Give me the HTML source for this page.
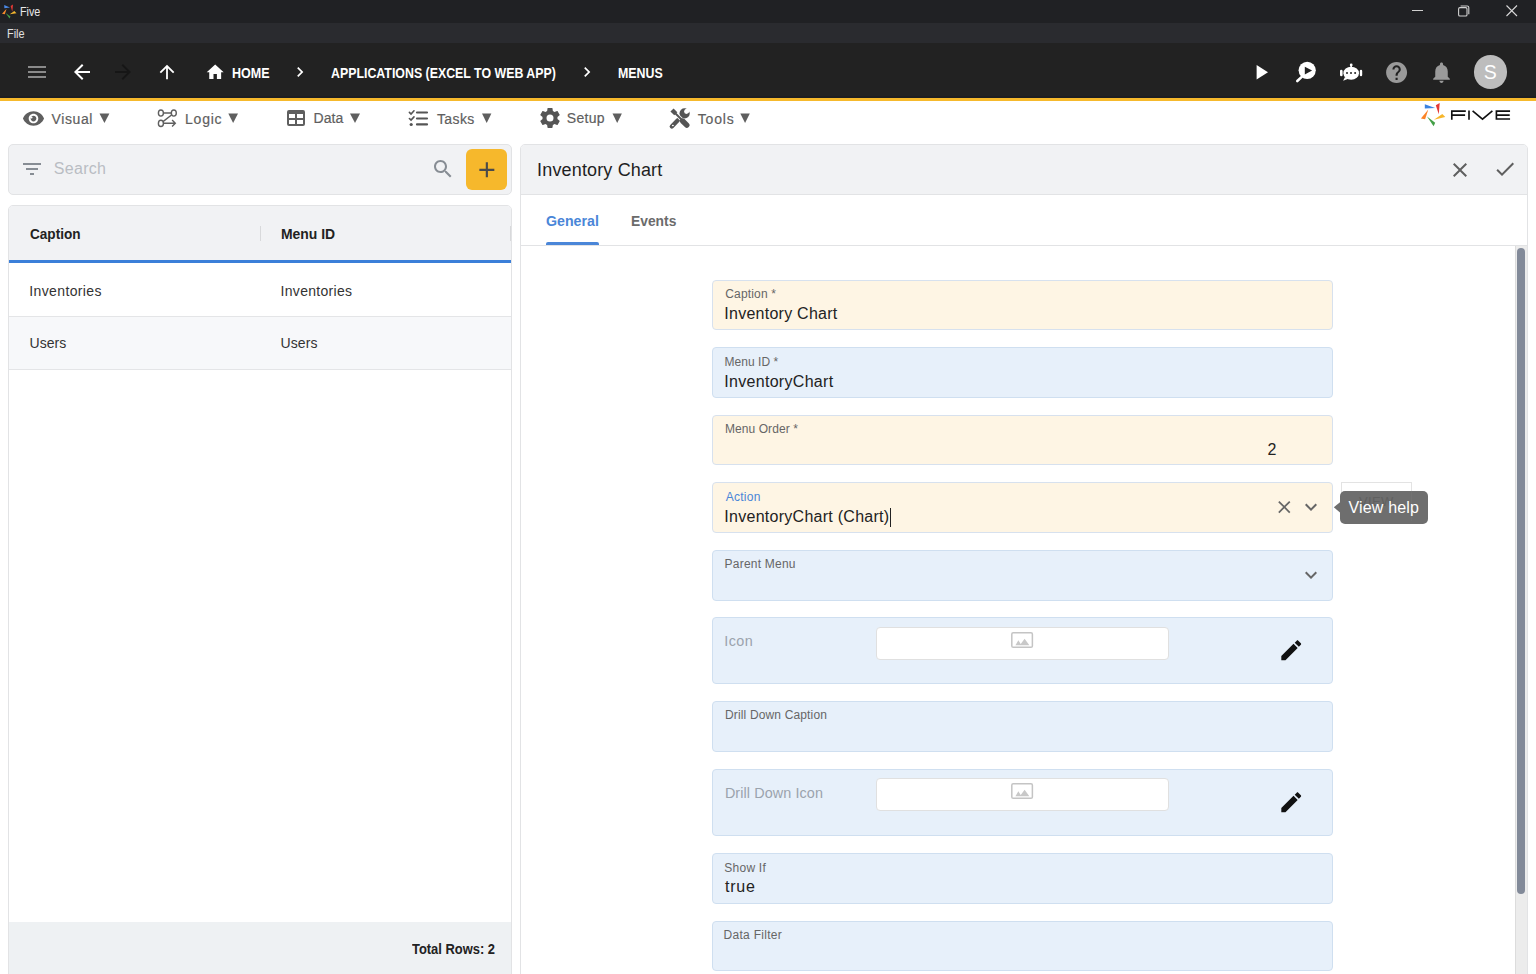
<!DOCTYPE html>
<html><head><meta charset="utf-8">
<style>
*{margin:0;padding:0;box-sizing:border-box}
html,body{width:1536px;height:974px;overflow:hidden;background:#fff;font-family:"Liberation Sans",sans-serif;position:relative}
.a{position:absolute}
.t{position:absolute;white-space:nowrap;line-height:1;transform-origin:0 0}
svg{position:absolute;overflow:visible}
#tVisual,#tLogic,#tData,#tTasks,#tSetup,#tTools{-webkit-text-stroke:0.2px currentColor}
</style><style id="adj">
#tFive{letter-spacing:0.0px;margin-left:0.0px;margin-top:0.7px;transform:scaleX(0.842)}
#tFile{letter-spacing:0.0px;margin-left:0.2px;margin-top:1.05px;transform:scaleX(0.8653)}
#tHome{letter-spacing:0.0px;margin-left:-0.35px;margin-top:0.35px;transform:scaleX(0.8953)}
#tApps{letter-spacing:0.0px;margin-left:-0.0px;margin-top:0.35px;transform:scaleX(0.8831)}
#tMenus{letter-spacing:0.0px;margin-left:-0.35px;margin-top:0.35px;transform:scaleX(0.8844)}
#tS{letter-spacing:0.0px;margin-left:0.84px;margin-top:0.42px;transform:scaleX(1.0)}
#tVisual{letter-spacing:0.608px;margin-left:0.0px;margin-top:0.7px;transform:scaleX(1.0)}
#tLogic{letter-spacing:0.78px;margin-left:-0.28px;margin-top:0.7px;transform:scaleX(1.0)}
#tData{letter-spacing:0.134px;margin-left:-0.36px;margin-top:0.0px;transform:scaleX(1.0)}
#tTasks{letter-spacing:0.4px;margin-left:0.28px;margin-top:0.7px;transform:scaleX(1.0)}
#tSetup{letter-spacing:0.32px;margin-left:-0.42px;margin-top:0.0px;transform:scaleX(1.0)}
#tTools{letter-spacing:0.84px;margin-left:-0.14px;margin-top:0.7px;transform:scaleX(1.0)}
#tSearch{letter-spacing:0.288px;margin-left:-0.98px;margin-top:0.42px;transform:scaleX(1.0)}
#tCapH{letter-spacing:0.0px;margin-left:0.0px;margin-top:0.35px;transform:scaleX(0.9434)}
#tMidH{letter-spacing:0.0px;margin-left:-0.35px;margin-top:0.35px;transform:scaleX(0.9679)}
#tInv1{letter-spacing:0.368px;margin-left:-0.7px;margin-top:0.7px;transform:scaleX(1.0)}
#tInv2{letter-spacing:0.304px;margin-left:-0.56px;margin-top:0.7px;transform:scaleX(1.0)}
#tUsr2{letter-spacing:0.08px;margin-left:-0.56px;margin-top:-0.28px;transform:scaleX(1.0)}
#tTotal{letter-spacing:0.0px;margin-left:0.0px;margin-top:0.7px;transform:scaleX(0.9223)}
#tTitle{letter-spacing:0.148px;margin-left:-1.4px;margin-top:-0.14px;transform:scaleX(1.0)}
#tGeneral{letter-spacing:0.0px;margin-left:-0.0px;margin-top:0.0px;transform:scaleX(0.9455)}
#tEvents{letter-spacing:0.0px;margin-left:-0.35px;margin-top:0.0px;transform:scaleX(0.9212)}
#lCap{letter-spacing:0.16px;margin-left:0.28px;margin-top:0.84px;transform:scaleX(1.0)}
#vCap{letter-spacing:0.251px;margin-left:-0.7px;margin-top:0.98px;transform:scaleX(1.0)}
#lMid{letter-spacing:0.03px;margin-left:-0.42px;margin-top:0.98px;transform:scaleX(1.0)}
#vMid{letter-spacing:0.296px;margin-left:-0.7px;margin-top:0.7px;transform:scaleX(1.0)}
#lOrd{letter-spacing:0.073px;margin-left:0.0px;margin-top:0.28px;transform:scaleX(1.0)}
#vOrd{letter-spacing:0.0px;margin-left:-0.28px;margin-top:1.26px;transform:scaleX(1.0)}
#lAct{letter-spacing:0.256px;margin-left:0.7px;margin-top:0.7px;transform:scaleX(1.0)}
#vAct{letter-spacing:0.27px;margin-left:-0.7px;margin-top:0.8px;transform:scaleX(1.0)}
#tHelp{letter-spacing:0.16px;margin-left:0.0px;margin-top:0.56px;transform:scaleX(1.0)}
#lPar{letter-spacing:0.224px;margin-left:-0.42px;margin-top:0.0px;transform:scaleX(1.0)}
#lIcon{letter-spacing:0.374px;margin-left:-0.7px;margin-top:0.14px;transform:scaleX(1.0)}
#lDdc{letter-spacing:0.15px;margin-left:0.0px;margin-top:0.56px;transform:scaleX(1.0)}
#lDdi{letter-spacing:0.091px;margin-left:-0.14px;margin-top:0.2px;transform:scaleX(1.0)}
#lShow{letter-spacing:0.24px;margin-left:-0.7px;margin-top:0.84px;transform:scaleX(1.0)}
#vShow{letter-spacing:0.746px;margin-left:0.0px;margin-top:0.0px;transform:scaleX(1.0)}
#lFilt{letter-spacing:0.272px;margin-left:-1.4px;margin-top:0.84px;transform:scaleX(1.0)}
#tUsr1{letter-spacing:0.08px;margin-left:-0.56px;margin-top:-0.28px;transform:scaleX(1.0)}
</style></head><body>

<!-- title bar -->
<div class="a" style="left:0;top:0;width:1536px;height:23px;background:#202124"></div>
<svg style="left:0;top:0" width="20" height="22" viewBox="0 0 20 22">
  <polygon points="4.2,5 4.4,8.3 10,7.6" fill="#4a8ae8"/>
  <polygon points="10.6,6 13,4.6 12.3,11.8" fill="#e53935"/>
  <polygon points="14.3,11 16.5,13.3 9.8,14.2" fill="#f5b82e"/>
  <polygon points="10.5,16.6 9.5,18.6 5.6,13.1" fill="#43a047"/>
  <polygon points="2,13.8 4.8,14.3 6.6,8.8" fill="#fb8c2c"/>
</svg>
<div class="t" id="tFive" style="left:19.8px;top:5.6px;font-size:12.8px;color:#e8e8e8">Five</div>
<!-- window controls -->
<div class="a" style="left:1412px;top:10px;width:10.5px;height:1.2px;background:#d0d0d0"></div>
<svg style="left:1458px;top:5px" width="12" height="12" viewBox="0 0 12 12"><rect x="0.6" y="2.6" width="8.4" height="8.4" rx="1.3" fill="none" stroke="#d0d0d0" stroke-width="1.1"/><path d="M2.6 1 H9.2 A1.6 1.6 0 0 1 10.8 2.6 V9.2" fill="none" stroke="#d0d0d0" stroke-width="1.1"/></svg>
<svg style="left:1505.5px;top:5px" width="12" height="12" viewBox="0 0 12 12"><path d="M0.5 0.5 L11 11 M11 0.5 L0.5 11" stroke="#d8d8d8" stroke-width="1.1"/></svg>

<!-- menu bar -->
<div class="a" style="left:0;top:23px;width:1536px;height:20px;background:#2a2b2f"></div><div class="a" style="left:0;top:43px;width:1536px;height:1px;background:#26272a"></div>
<div class="t" id="tFile" style="left:6.6px;top:26.8px;font-size:12.6px;color:#e0e0e0">File</div>

<!-- nav bar -->
<div class="a" style="left:0;top:43px;width:1536px;height:55px;background:#222222"></div>
<div class="a" style="left:0;top:96px;width:1536px;height:2px;background:#1d1e21"></div>
<div class="a" style="left:0;top:98px;width:1536px;height:3px;background:#f6b92c"></div>

<!-- nav icons -->
<svg style="left:25px;top:60px" width="24" height="24" viewBox="0 0 24 24"><path fill="#8a8a8a" d="M3 18h18v-2H3v2zm0-5h18v-2H3v2zm0-7v2h18V6H3z"/></svg>
<svg style="left:70px;top:60px" width="24" height="24" viewBox="0 0 24 24"><path fill="#ffffff" d="M20 11H7.83l5.59-5.59L12 4l-8 8 8 8 1.41-1.41L7.83 13H20v-2z"/></svg>
<svg style="left:111px;top:60px" width="24" height="24" viewBox="0 0 24 24"><path fill="#161616" d="M12 4l-1.41 1.41L16.17 11H4v2h12.17l-5.58 5.59L12 20l8-8z"/></svg>
<svg style="left:156px;top:61px" width="22" height="22" viewBox="0 0 24 24"><path fill="#ffffff" d="M4 12l1.41 1.41L11 7.83V20h2V7.83l5.58 5.59L20 12l-8-8-8 8z"/></svg>
<svg style="left:205.3px;top:62.4px" width="20.4" height="20.4" viewBox="0 0 24 24"><path fill="#ffffff" d="M10 20v-6h4v6h5v-8h3L12 3 2 12h3v8z"/></svg>
<div class="t" id="tHome" style="left:231.9px;top:65.5px;font-size:14px;font-weight:bold;color:#fff">HOME</div>
<svg style="left:290px;top:62px" width="20" height="20" viewBox="0 0 24 24"><path fill="#fff" d="M10 6L8.59 7.41 13.17 12l-4.58 4.59L10 18l6-6z"/></svg>
<div class="t" id="tApps" style="left:331.2px;top:65.5px;font-size:14px;font-weight:bold;color:#fff">APPLICATIONS (EXCEL TO WEB APP)</div>
<svg style="left:577px;top:62px" width="20" height="20" viewBox="0 0 24 24"><path fill="#fff" d="M10 6L8.59 7.41 13.17 12l-4.58 4.59L10 18l6-6z"/></svg>
<div class="t" id="tMenus" style="left:618.1px;top:65.5px;font-size:14px;font-weight:bold;color:#fff">MENUS</div>

<!-- right nav icons -->
<svg style="left:1253px;top:63px" width="18" height="18" viewBox="0 0 18 18"><path fill="#fff" d="M3.6 2 L3.6 16.4 L15 9.2 Z"/></svg>
<svg style="left:1290px;top:56px" width="32" height="32" viewBox="0 0 32 32">
  <circle cx="17.2" cy="14.3" r="8.6" fill="#fff"/>
  <path d="M14.8 10.7 L14.8 18.5 L22.1 14.6 Z" fill="#222"/>
  <path d="M7.3 25 L12 20.6" stroke="#fff" stroke-width="2.6" stroke-linecap="round"/>
</svg>
<svg style="left:1330px;top:56px" width="40" height="32" viewBox="0 0 40 32">
  <ellipse cx="21.2" cy="17.2" rx="7.8" ry="6.5" fill="#fff"/>
  <circle cx="21.2" cy="9" r="1.4" fill="#fff"/>
  <path d="M21.2 8 V11" stroke="#fff" stroke-width="1.6"/>
  <rect x="10" y="13.8" width="2.6" height="6.5" rx="1.3" fill="#fff"/>
  <rect x="29.8" y="13.8" width="2.4" height="6.5" rx="1.2" fill="#fff"/>
  <path d="M15 21 L13.1 24.7 L19 22.5 Z" fill="#fff"/>
  <circle cx="17" cy="16.9" r="1" fill="#222"/><circle cx="21" cy="16.9" r="1" fill="#222"/><circle cx="25.1" cy="16.9" r="1" fill="#222"/>
</svg>
<svg style="left:1383.5px;top:59.5px" width="25.2" height="25.2" viewBox="0 0 24 24"><path fill="#9a9a9a" d="M12 2C6.48 2 2 6.48 2 12s4.48 10 10 10 10-4.48 10-10S17.52 2 12 2zm1 17h-2v-2h2v2zm2.07-7.75l-.9.92C13.45 12.9 13 13.5 13 15h-2v-.5c0-1.1.45-2.1 1.17-2.83l1.24-1.26c.37-.36.59-.86.59-1.41 0-1.1-.9-2-2-2s-2 .9-2 2H8c0-2.21 1.79-4 4-4s4 1.79 4 4c0 .88-.36 1.68-.93 2.25z"/></svg>
<svg style="left:1429px;top:60px" width="25" height="25" viewBox="0 0 24 24"><path fill="#9a9a9a" d="M12 22c1.1 0 2-.9 2-2h-4c0 1.1.89 2 2 2zm6-6v-5c0-3.07-1.64-5.64-4.5-6.32V4c0-.83-.67-1.5-1.5-1.5s-1.5.67-1.5 1.5v.68C7.63 5.36 6 7.92 6 11v5l-2 2v1h16v-1l-2-2z"/></svg>
<div class="a" style="left:1473.6px;top:55.4px;width:33.4px;height:33.4px;border-radius:50%;background:#bdbdbd"></div>
<div class="t" id="tS" style="left:1483px;top:62.5px;font-size:19.5px;color:#fff">S</div>

<!-- toolbar -->
<svg style="left:22.2px;top:106.7px" width="23" height="23" viewBox="0 0 24 24"><path fill="#5f5f5f" d="M12 4.5C7 4.5 2.73 7.61 1 12c1.73 4.39 6 7.5 11 7.5s9.27-3.11 11-7.5c-1.73-4.39-6-7.5-11-7.5zM12 17c-2.76 0-5-2.24-5-5s2.24-5 5-5 5 2.24 5 5-2.24 5-5 5zm0-8c-1.66 0-3 1.34-3 3s1.34 3 3 3 3-1.34 3-3-1.34-3-3-3z"/><circle cx="9.9" cy="11" r="1.1" fill="#fff"/></svg>
<div class="t" id="tVisual" style="left:51.5px;top:111.2px;font-size:14px;color:#5f5f5f">Visual</div>
<svg style="left:152px;top:104px" width="30" height="28" viewBox="0 0 30 28">
  <g fill="none" stroke="#5f5f5f" stroke-width="1.4">
  <ellipse cx="8.9" cy="9.05" rx="2.5" ry="3.1"/><ellipse cx="21.8" cy="9.05" rx="2.5" ry="3.1"/><ellipse cx="8.9" cy="19.4" rx="2.5" ry="3.1"/>
  <path d="M11.4 9.05 H19.3 M19.5 11 L11 17.6 M11.4 19.2 H22.5 M20.1 16.1 L23.3 19.2 L20.1 22.4"/>
  </g>
</svg>
<div class="t" id="tLogic" style="left:185.3px;top:111.2px;font-size:14px;color:#5f5f5f">Logic</div>
<svg style="left:284px;top:106px" width="24" height="24" viewBox="0 0 24 24"><path fill="#5f5f5f" d="M5,4H19A2,2 0 0,1 21,6V18A2,2 0 0,1 19,20H5A2,2 0 0,1 3,18V6A2,2 0 0,1 5,4M5,8V12H11V8H5M13,8V12H19V8H13M5,14V18H11V14H5M13,14V18H19V14H13Z"/></svg>
<div class="t" id="tData" style="left:313.75px;top:111.2px;font-size:14px;color:#5f5f5f">Data</div>
<svg style="left:404px;top:104px" width="30" height="28" viewBox="0 0 30 28">
  <g fill="none" stroke="#555" stroke-width="1.6" stroke-linecap="round">
  <path d="M5.4 8.4 L7.04 10 L10 6.8 M5.4 14.5 L7.04 16.1 L10 12.9"/>
  </g>
  <circle cx="7.2" cy="20.5" r="1.6" fill="#555"/>
  <g stroke="#555" stroke-width="2.2" stroke-linecap="round"><path d="M13 8.5 H23 M13 14.5 H23 M13 20.4 H23"/></g>
</svg>
<div class="t" id="tTasks" style="left:436.7px;top:111.2px;font-size:14px;color:#5f5f5f">Tasks</div>
<svg style="left:537.5px;top:106px" width="24" height="24" viewBox="0 0 24 24"><path fill="#555" d="M12,15.5A3.5,3.5 0 0,1 8.5,12A3.5,3.5 0 0,1 12,8.5A3.5,3.5 0 0,1 15.5,12A3.5,3.5 0 0,1 12,15.5M19.43,12.97C19.47,12.65 19.5,12.33 19.5,12C19.5,11.67 19.47,11.34 19.43,11L21.54,9.37C21.73,9.22 21.78,8.95 21.66,8.73L19.66,5.27C19.54,5.05 19.27,4.96 19.05,5.05L16.56,6.05C16.04,5.66 15.5,5.32 14.87,5.07L14.5,2.42C14.46,2.18 14.25,2 14,2H10C9.75,2 9.540,2.18 9.5,2.42L9.13,5.07C8.5,5.32 7.96,5.66 7.44,6.05L4.95,5.05C4.73,4.960 4.46,5.05 4.34,5.27L2.34,8.73C2.21,8.95 2.27,9.22 2.46,9.37L4.57,11C4.53,11.34 4.5,11.67 4.5,12C4.5,12.33 4.53,12.65 4.57,12.97L2.46,14.63C2.27,14.78 2.21,15.05 2.34,15.27L4.34,18.73C4.46,18.95 4.73,19.03 4.95,18.95L7.44,17.94C7.96,18.34 8.5,18.68 9.13,18.93L9.5,21.58C9.54,21.82 9.75,22 10,22H14C14.25,22 14.46,21.82 14.5,21.58L14.87,18.93C15.5,18.67 16.04,18.34 16.56,17.94L19.05,18.95C19.27,19.03 19.54,18.95 19.66,18.73L21.66,15.27C21.78,15.05 21.73,14.78 21.54,14.63L19.43,12.97Z"/></svg>
<div class="t" id="tSetup" style="left:567.2px;top:111.2px;font-size:14px;color:#5f5f5f">Setup</div>
<svg style="left:666px;top:104px" width="30" height="28" viewBox="0 0 30 28">
  <g stroke="#555" fill="none">
    <path d="M5.8 22.4 L11.8 16.2" stroke-width="4.3" stroke-linecap="round"/>
    <path d="M11 17 L16.5 11.5" stroke-width="3"/>
  </g>
  <circle cx="18.6" cy="9.4" r="5.1" fill="#555"/>
  <circle cx="20.4" cy="7.6" r="2.3" fill="#fff"/>
  <path d="M20.4 7.6 L25 3" stroke="#fff" stroke-width="4.4"/>
  <path d="M5 5 L22 22" stroke="#fff" stroke-width="3.8"/>
  <g stroke="#555" fill="none">
    <path d="M6 6 L9.8 9.8" stroke-width="4.4"/>
    <path d="M9 9 L15.5 15.5" stroke-width="1.9"/>
    <path d="M16.6 17 L20.8 21.2" stroke-width="5.4" stroke-linecap="round"/>
  </g>
  <ellipse cx="6.9" cy="21.5" rx="1" ry="0.8" fill="#fff"/>
</svg>
<div class="t" id="tTools" style="left:697.9px;top:111.2px;font-size:14px;color:#5f5f5f">Tools</div>
<!-- triangles -->
<svg style="left:0;top:0" width="800" height="130" viewBox="0 0 800 130">
  <g fill="#5f5f5f">
  <path d="M99.5 113.5 H109.4 L104.45 123 Z"/>
  <path d="M228.3 113.5 H238 L233.15 123 Z"/>
  <path d="M350 113.5 H360 L355 123 Z"/>
  <path d="M482 113.5 H491.4 L486.7 123 Z"/>
  <path d="M612.5 113.5 H621.9 L617.2 123 Z"/>
  <path d="M740.3 113.5 H749.8 L745.05 123 Z"/>
  </g>
</svg>
<!-- five logo -->
<svg style="left:1415px;top:98px" width="100" height="34" viewBox="0 0 100 34">
  <polygon points="9.8,6.2 9.8,10.4 20.2,10.1" fill="#3b82e0"/>
  <polygon points="20.8,7.2 24.7,4.9 23.8,16.3" fill="#e53935"/>
  <polygon points="27.3,16 30.3,18.9 18.9,21.8" fill="#f7b62b"/>
  <polygon points="20.2,24.7 18.6,28.3 12,18.6" fill="#43a047"/>
  <polygon points="5.9,20.5 10.1,21.2 13.3,11.4" fill="#fb8326"/>
  <g stroke="#111" stroke-width="1.65" fill="none">
    <path d="M36.8 12.4 V21.8 M36 13.15 H50.8 M36.8 17.06 H50.1"/>
    <path d="M54 12.4 V21.8"/>
    <path d="M57.6 12.9 L67.5 21.1 L77.4 12.9"/>
    <path d="M81.4 12.4 V21.8 M80.6 13.15 H95.05 M80.6 17.06 H94.7 M80.6 20.96 H95.05"/>
  </g>
</svg>

<!-- LEFT PANEL -->
<div class="a" style="left:8px;top:144px;width:504px;height:51px;background:#f1f2f4;border:1px solid #e2e3e5;border-radius:5px"></div>
<svg style="left:20px;top:157px" width="24" height="24" viewBox="0 0 24 24"><path fill="#878d94" d="M10 18h4v-2h-4v2zM3 6v2h18V6H3zm3 7h12v-2H6v2z"/></svg>
<div class="t" id="tSearch" style="left:54.8px;top:161px;font-size:16px;color:#b9bdc3">Search</div>
<svg style="left:431px;top:157px" width="24" height="24" viewBox="0 0 24 24"><path fill="#878d94" d="M15.5 14h-.79l-.28-.27C15.41 12.59 16 11.11 16 9.5 16 5.91 13.09 3 9.5 3S3 5.91 3 9.5 5.91 16 9.5 16c1.61 0 3.09-.59 4.23-1.57l.27.28v.79l5 4.99L20.49 19l-4.99-5zm-6 0C7.01 14 5 11.99 5 9.5S7.01 5 9.5 5 14 7.01 14 9.5 11.99 14 9.5 14z"/></svg>
<div class="a" style="left:466px;top:149px;width:41px;height:41px;background:#f6b82c;border-radius:6px"></div>
<svg style="left:473.6px;top:156.6px" width="25.7" height="25.7" viewBox="0 0 24 24"><path fill="#4a4a4a" d="M19 13h-6v6h-2v-6H5v-2h6V5h2v6h6v2z"/></svg>

<div class="a" style="left:8px;top:205px;width:504px;height:789px;background:#fff;border:1px solid #e2e3e5;border-radius:5px 5px 0 0"></div>
<div class="a" style="left:9px;top:206px;width:502px;height:54px;background:#f1f2f4;border-radius:4px 4px 0 0"></div>
<div class="a" style="left:9px;top:260px;width:502px;height:3px;background:#3b7fd9"></div>
<div class="a" style="left:259.5px;top:226px;width:1.5px;height:15px;background:#d8d9db"></div>
<div class="a" style="left:509.5px;top:226px;width:1.5px;height:15px;background:#d8d9db"></div>
<div class="t" id="tCapH" style="left:30px;top:226.5px;font-size:14.4px;font-weight:bold;color:#222">Caption</div>
<div class="t" id="tMidH" style="left:281.1px;top:226.5px;font-size:14.4px;font-weight:bold;color:#222">Menu ID</div>
<div class="a" style="left:9px;top:263px;width:502px;height:53px;background:#fff"></div>
<div class="a" style="left:9px;top:316px;width:502px;height:1px;background:#e4e5e7"></div>
<div class="t" id="tInv1" style="left:30px;top:283.4px;font-size:14px;color:#333">Inventories</div>
<div class="t" id="tInv2" style="left:281.1px;top:283.4px;font-size:14px;color:#333">Inventories</div>
<div class="a" style="left:9px;top:317px;width:502px;height:52px;background:#f7f8fa"></div>
<div class="a" style="left:9px;top:369px;width:502px;height:1px;background:#e4e5e7"></div>
<div class="t" id="tUsr1" style="left:30px;top:336.5px;font-size:14px;color:#333">Users</div>
<div class="t" id="tUsr2" style="left:281.1px;top:336.5px;font-size:14px;color:#333">Users</div>
<div class="a" style="left:9px;top:922px;width:502px;height:52px;background:#eef1f3"></div>
<div class="t" id="tTotal" style="left:411.6px;top:941.4px;font-size:14px;font-weight:bold;color:#222">Total Rows: 2</div>

<!-- RIGHT PANEL -->
<div class="a" style="left:520px;top:144px;width:1008px;height:850px;background:#fff;border:1px solid #e2e3e5;border-radius:5px 5px 0 0"></div>
<div class="a" style="left:521px;top:145px;width:1006px;height:49px;background:#f1f2f4;border-radius:4px 4px 0 0"></div>
<div class="a" style="left:521px;top:194px;width:1006px;height:1px;background:#e2e3e5"></div>
<div class="t" id="tTitle" style="left:538.5px;top:160.7px;font-size:18px;color:#1f1f1f">Inventory Chart</div>
<svg style="left:1447.7px;top:157.5px" width="24" height="24" viewBox="0 0 24 24"><path fill="#5f5f5f" d="M19 6.41L17.59 5 12 10.59 6.41 5 5 6.41 10.59 12 5 17.59 6.41 19 12 13.41 17.59 19 19 17.59 13.41 12z"/></svg>
<svg style="left:1492.6px;top:157.4px" width="24" height="24" viewBox="0 0 24 24"><path fill="#5f5f5f" d="M9 16.17L4.83 12l-1.42 1.41L9 19 21 7l-1.41-1.41z"/></svg>
<div class="t" id="tGeneral" style="left:546.4px;top:213.2px;font-size:15px;font-weight:bold;color:#4a86d8">General</div>
<div class="t" id="tEvents" style="left:631.5px;top:213.2px;font-size:15px;font-weight:bold;color:#6b6b6b">Events</div>
<div class="a" style="left:546px;top:242px;width:53px;height:4px;background:#4a86d8;border-radius:2px 2px 0 0"></div>
<div class="a" style="left:521px;top:245px;width:1006px;height:1px;background:#e2e3e5"></div>
<!-- scrollbar -->
<div class="a" style="left:1515px;top:246px;width:12px;height:728px;background:#ececec;border-left:1px solid #dcdcdc"></div>
<div class="a" style="left:1517px;top:248px;width:8px;height:646px;background:#828a99;border-radius:4px"></div>

<!-- fields -->
<div class="a" style="left:711.5px;top:279.5px;width:621px;height:50.5px;background:#fef5e4;border:1px solid #d7e1ee;border-radius:4px"></div>
<div class="t" id="lCap" style="left:725px;top:287.2px;font-size:12px;color:#666">Caption *</div>
<div class="t" id="vCap" style="left:725px;top:305.5px;font-size:16px;color:#222">Inventory Chart</div>

<div class="a" style="left:711.5px;top:347px;width:621px;height:50.5px;background:#e7f0fa;border:1px solid #cfdff0;border-radius:4px"></div>
<div class="t" id="lMid" style="left:725px;top:354.8px;font-size:12px;color:#666">Menu ID *</div>
<div class="t" id="vMid" style="left:725px;top:373px;font-size:16px;color:#222">InventoryChart</div>

<div class="a" style="left:711.5px;top:414.5px;width:621px;height:50.5px;background:#fef5e4;border:1px solid #d7e1ee;border-radius:4px"></div>
<div class="t" id="lOrd" style="left:725px;top:422.7px;font-size:12px;color:#666">Menu Order *</div>
<div class="t" id="vOrd" style="left:1267.8px;top:440.7px;font-size:16px;color:#222">2</div>

<div class="a" style="left:711.5px;top:482px;width:621px;height:50.5px;background:#fef5e4;border:1px solid #d7e1ee;border-radius:4px"></div>
<div class="t" id="lAct" style="left:725px;top:490.1px;font-size:12px;color:#4a86d8">Action</div>
<div class="t" id="vAct" style="left:725px;top:508.7px;font-size:16px;color:#222">InventoryChart (Chart)</div>
<div class="a" style="left:890px;top:507.5px;width:1.3px;height:19px;background:#222"></div>
<svg style="left:1277.6px;top:501.4px" width="12.6" height="12.2" viewBox="5 5 14 14"><path fill="#666" d="M19 6.41L17.59 5 12 10.59 6.41 5 5 6.41 10.59 12 5 17.59 6.41 19 12 13.41 17.59 19 19 17.59 13.41 12z"/></svg>
<svg style="left:1298.8px;top:495.4px" width="24" height="24" viewBox="0 0 24 24"><path fill="#666" d="M16.59 8.59L12 13.17 7.41 8.59 6 10l6 6 6-6z"/></svg>
<!-- view help -->
<div class="a" style="left:1341.4px;top:482px;width:70.6px;height:39px;border:1px solid #e3e3e3;background:#fff"></div>
<div class="a" style="left:1339.5px;top:491.3px;width:88px;height:32.4px;background:#6e6e6e;border-radius:5px"></div>
<svg style="left:1333px;top:502px" width="8" height="11" viewBox="0 0 8 11"><path d="M0.8 5.3 L7 0.3 V10.4 Z" fill="#6e6e6e"/></svg>
<div class="a" style="left:1411px;top:491.3px;width:1px;height:30px;background:#727272"></div>
<div class="t" style="left:1359.1px;top:494.7px;font-size:13px;color:#606060;letter-spacing:0.3px">VIEW</div>
<div class="t" id="tHelp" style="left:1348.5px;top:499.6px;font-size:16px;color:#fff">View help</div>

<div class="a" style="left:711.5px;top:550px;width:621px;height:50.5px;background:#e7f0fa;border:1px solid #cfdff0;border-radius:4px"></div>
<div class="t" id="lPar" style="left:725px;top:558px;font-size:12px;color:#666">Parent Menu</div>
<svg style="left:1298.5px;top:563px" width="24" height="24" viewBox="0 0 24 24"><path fill="#666" d="M16.59 8.59L12 13.17 7.41 8.59 6 10l6 6 6-6z"/></svg>

<div class="a" style="left:711.5px;top:617.2px;width:621px;height:67px;background:#e7f0fa;border:1px solid #cfdff0;border-radius:4px"></div>
<div class="t" id="lIcon" style="left:725px;top:633.4px;font-size:14.4px;color:#9ba3ad">Icon</div>
<div class="a" style="left:876px;top:626.5px;width:292.5px;height:33px;background:#fff;border:1px solid #e0e0e0;border-radius:4px"></div>
<svg style="left:1011px;top:631.5px" width="22.2" height="16.1" viewBox="0 0 22.2 16.1"><rect x="0.8" y="0.8" width="20.6" height="14.5" rx="1.4" fill="none" stroke="#c4c4c4" stroke-width="1.5"/><path d="M4.4 13.3 L7.4 8.3 L10.4 13.3 Z M8.8 13.3 L13.6 6.8 L18.4 13.3 Z" fill="#c8c8c8"/></svg>
<svg style="left:1277.7px;top:637.3px" width="26.5" height="26.5" viewBox="0 0 24 24"><path fill="#111" d="M3 17.25V21h3.75L17.81 9.94l-3.75-3.75L3 17.25zM20.71 7.04c.39-.39.39-1.020 0-1.41l-2.34-2.34c-.39-.39-1.02-.39-1.41 0l-1.83 1.83 3.75 3.75 1.83-1.83z"/></svg>

<div class="a" style="left:711.5px;top:701.2px;width:621px;height:50.5px;background:#e7f0fa;border:1px solid #cfdff0;border-radius:4px"></div>
<div class="t" id="lDdc" style="left:725px;top:708.9px;font-size:12px;color:#666">Drill Down Caption</div>

<div class="a" style="left:711.5px;top:769px;width:621px;height:67px;background:#e7f0fa;border:1px solid #cfdff0;border-radius:4px"></div>
<div class="t" id="lDdi" style="left:725px;top:785.4px;font-size:14.4px;color:#9ba3ad">Drill Down Icon</div>
<div class="a" style="left:876px;top:778.3px;width:292.5px;height:33px;background:#fff;border:1px solid #e0e0e0;border-radius:4px"></div>
<svg style="left:1011px;top:783.3px" width="22.2" height="16.1" viewBox="0 0 22.2 16.1"><rect x="0.8" y="0.8" width="20.6" height="14.5" rx="1.4" fill="none" stroke="#c4c4c4" stroke-width="1.5"/><path d="M4.4 13.3 L7.4 8.3 L10.4 13.3 Z M8.8 13.3 L13.6 6.8 L18.4 13.3 Z" fill="#c8c8c8"/></svg>
<svg style="left:1277.7px;top:789.1px" width="26.5" height="26.5" viewBox="0 0 24 24"><path fill="#111" d="M3 17.25V21h3.75L17.81 9.94l-3.75-3.75L3 17.25zM20.71 7.04c.39-.39.39-1.020 0-1.41l-2.34-2.34c-.39-.39-1.02-.39-1.41 0l-1.83 1.83 3.75 3.75 1.83-1.83z"/></svg>

<div class="a" style="left:711.5px;top:853px;width:621px;height:51px;background:#e7f0fa;border:1px solid #cfdff0;border-radius:4px"></div>
<div class="t" id="lShow" style="left:725px;top:860.8px;font-size:12px;color:#666">Show If</div>
<div class="t" id="vShow" style="left:725px;top:879px;font-size:16px;color:#222">true</div>

<div class="a" style="left:711.5px;top:920.5px;width:621px;height:50.5px;background:#e7f0fa;border:1px solid #cfdff0;border-radius:4px"></div>
<div class="t" id="lFilt" style="left:725px;top:928.4px;font-size:12px;color:#666">Data Filter</div>

</body></html>
